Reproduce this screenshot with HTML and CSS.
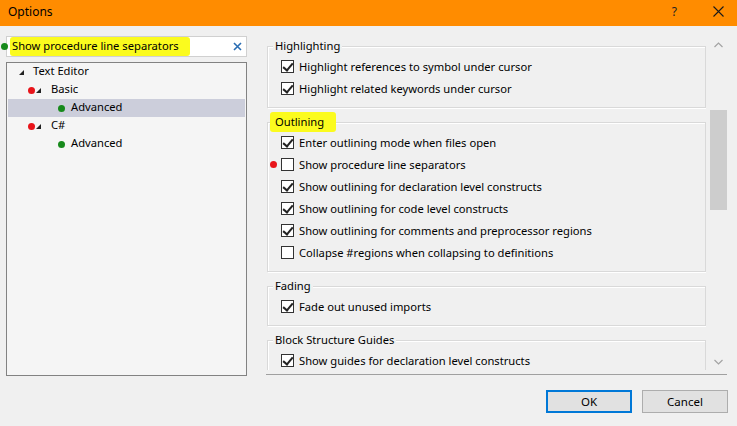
FILE: index.html
```html
<!DOCTYPE html>
<html>
<head>
<meta charset="utf-8">
<link rel="stylesheet" href="styles.css">
</head>
<body>
<div class="window">
  <header class="titlebar">
    <span class="title">Options</span>
    <div class="title-btns">
      <span class="help">?</span>
      <svg class="close" width="11" height="11" viewBox="0 0 11 11"><path d="M0.5 0.5 L10.5 10.5 M10.5 0.5 L0.5 10.5" stroke="#1a1a1a" stroke-width="1.1" fill="none"/></svg>
    </div>
  </header>

  <div class="main">
    <div class="left">
      <div class="search">
        <span class="dot green search-dot"></span>
        <span class="hl search-hl">Show procedure line separators</span>
        <svg class="clear" width="9" height="9" viewBox="0 0 9 9"><path d="M1 1 L8 8 M8 1 L1 8" stroke="#2a6db3" stroke-width="1.6" fill="none"/></svg>
      </div>
      <div class="tree">
        <div class="node lvl0"><svg class="tri" width="5" height="5" viewBox="0 0 5 5"><polygon points="5,0 5,5 0,5" fill="#222"/></svg><span class="label">Text Editor</span></div>
        <div class="node lvl1"><span class="dot red"></span><svg class="tri" width="5" height="5" viewBox="0 0 5 5"><polygon points="5,0 5,5 0,5" fill="#222"/></svg><span class="label">Basic</span></div>
        <div class="node lvl2 selected"><span class="dot green"></span><span class="label">Advanced</span></div>
        <div class="node lvl1"><span class="dot red"></span><svg class="tri" width="5" height="5" viewBox="0 0 5 5"><polygon points="5,0 5,5 0,5" fill="#222"/></svg><span class="label">C#</span></div>
        <div class="node lvl2"><span class="dot green"></span><span class="label">Advanced</span></div>
      </div>
    </div>

    <div class="right">
      <div class="viewport">
        <div class="scroll-content">
          <fieldset class="group">
            <legend>Highlighting</legend>
            <div class="opt"><span class="cb checked"></span>Highlight references to symbol under cursor</div>
            <div class="opt"><span class="cb checked"></span>Highlight related keywords under cursor</div>
          </fieldset>
          <fieldset class="group">
            <legend class="legend-hl"><span class="hl outline-hl">Outlining</span></legend>
            <div class="opt"><span class="cb checked"></span>Enter outlining mode when files open</div>
            <div class="opt opt-marked"><span class="dot red"></span><span class="cb"></span>Show procedure line separators</div>
            <div class="opt"><span class="cb checked"></span>Show outlining for declaration level constructs</div>
            <div class="opt"><span class="cb checked"></span>Show outlining for code level constructs</div>
            <div class="opt"><span class="cb checked"></span>Show outlining for comments and preprocessor regions</div>
            <div class="opt"><span class="cb"></span>Collapse #regions when collapsing to definitions</div>
          </fieldset>
          <fieldset class="group">
            <legend>Fading</legend>
            <div class="opt"><span class="cb checked"></span>Fade out unused imports</div>
          </fieldset>
          <fieldset class="group group-last">
            <legend>Block Structure Guides</legend>
            <div class="opt"><span class="cb checked"></span>Show guides for declaration level constructs</div>
          </fieldset>
        </div>
        <div class="scrollbar">
          <div class="sb-btn"><svg width="9" height="6" viewBox="0 0 9 6"><path d="M0.5 5 L4.5 1 L8.5 5" stroke="#a3a3a3" stroke-width="1.2" fill="none"/></svg></div>
          <div class="sb-track"><div class="sb-thumb"></div></div>
          <div class="sb-btn"><svg width="9" height="6" viewBox="0 0 9 6"><path d="M0.5 1 L4.5 5 L8.5 1" stroke="#a3a3a3" stroke-width="1.2" fill="none"/></svg></div>
        </div>
      </div>
    </div>
  </div>

  <footer class="footer">
    <button class="btn btn-default">OK</button>
    <button class="btn">Cancel</button>
  </footer>
</div>
</body>
</html>
```

FILE: styles.css
```css
* { box-sizing: border-box; }

html, body {
  margin: 0;
  padding: 0;
}

body {
  width: 737px;
  height: 426px;
  overflow: hidden;
  background: #f0f0f0;
  font-family: "Noto Sans", "Open Sans", sans-serif;
  font-size: 11.2px;
  color: #000;
}

.window {
  display: flex;
  flex-direction: column;
  height: 426px;
}

/* title bar */
.titlebar {
  height: 26px;
  background: #ff8c00;
  display: flex;
  align-items: center;
  justify-content: space-between;
  padding: 0 13px 0 8px;
}

.title {
  font-size: 12px;
  line-height: 16px;
  margin-top: -2px;
}

.title-btns {
  display: flex;
  align-items: center;
  gap: 36px;
  margin-top: -3px;
}

.help {
  font-size: 12px;
  color: #222;
}

/* main area */
.main {
  display: flex;
  padding: 10px 0 0 6px;
  gap: 19px;
  height: 350px;
}

.left {
  width: 241px;
  display: flex;
  flex-direction: column;
  gap: 5px;
}

.search {
  position: relative;
  height: 21px;
  background: #fff;
  border: 1px solid #d0d0d0;
  display: flex;
  align-items: center;
  padding-left: 3px;
}

.search-dot {
  position: absolute;
  left: -6px;
  top: 6px;
}

.hl {
  background: #fbfb1e;
  border-radius: 3px;
}

.search-hl {
  padding: 1px 11px 3px 2px;
  line-height: 15px;
}

.clear {
  margin-left: auto;
  margin-right: 4px;
}

.tree {
  height: 314px;
  background: #f5f5f5;
  border: 1px solid #828282;
  padding: 0 1px;
}

.node {
  height: 18px;
  display: flex;
  align-items: center;
}

.node .label {
  line-height: 16px;
  padding-bottom: 2px;
}

.node.selected {
  background: #cccedb;
}

.lvl0 { padding-left: 11px; }
.lvl0 .label { margin-left: 9px; }
.lvl1 { padding-left: 20px; }
.lvl1 .tri { margin-left: 1px; }
.lvl1 .label { margin-left: 10px; }
.lvl2 { padding-left: 50px; }
.lvl2 .label { margin-left: 6px; }

.dot {
  display: inline-block;
  border-radius: 50%;
  flex: none;
}

.dot.red {
  width: 7px;
  height: 7px;
  background: #e8141a;
}

.dot.green {
  width: 7px;
  height: 7px;
  background: #178a1c;
}

.tri { flex: none; }

/* right panel */
.right {
  width: 461px;
  height: 339px;
  border-bottom: 1px solid #a0a0a0;
  padding-bottom: 4px;
}

.viewport {
  display: flex;
  height: 334px;
  overflow: hidden;
}

.scroll-content {
  width: 444px;
  padding: 2px 0 0 1px;
  overflow: hidden;
}

.group {
  margin: 0 0 6px;
  padding: 1px 0 8px;
  min-width: 0;
  width: 439px;
  border: 1px solid #d9d9d9;
  box-shadow: inset 1px 1px 0 #fff, 1px 1px 0 #fff;
}

.group-last {
  padding-bottom: 20px;
}

.group legend {
  padding: 0 2px;
  margin-left: 5px;
  line-height: 16px;
  background: #f0f0f0;
}

.group legend.legend-hl {
  padding: 0;
  margin-left: 2px;
  background: transparent;
}

.outline-hl {
  display: inline-block;
  padding: 2px 12px 2px 5px;
  line-height: 16px;
  margin: -2px 0;
}

.opt {
  height: 22px;
  display: flex;
  align-items: center;
  padding-left: 13px;
  white-space: nowrap;
}

.opt.opt-marked {
  padding-left: 2px;
}

.opt-marked .dot {
  margin-right: 4px;
}

.cb {
  width: 13px;
  height: 13px;
  flex: none;
  border: 1px solid #333;
  background: #fff;
  margin-right: 5px;
  position: relative;
}

.cb.checked::after {
  content: "";
  position: absolute;
  left: 3px;
  top: 0px;
  width: 4px;
  height: 8px;
  border-right: 2px solid #222;
  border-bottom: 2px solid #222;
  transform: rotate(40deg);
}

.scrollbar {
  width: 17px;
  margin-left: 4px;
  display: flex;
  flex-direction: column;
}

.sb-btn {
  height: 17px;
  display: flex;
  align-items: center;
  justify-content: center;
}

.sb-track {
  flex: 1;
  padding-top: 57px;
}

.sb-thumb {
  height: 100px;
  background: #cdcdcd;
}

/* footer */
.footer {
  display: flex;
  justify-content: flex-end;
  gap: 10px;
  padding: 14px 9px 0 0;
}

.btn {
  width: 86px;
  height: 23px;
  font-family: "Noto Sans", "Open Sans", sans-serif;
  font-size: 11.5px;
  color: #000;
  background: #e1e1e1;
  border: 1px solid #adadad;
  padding: 0;
}

.btn-default {
  border: 2px solid #0078d7;
}
```
